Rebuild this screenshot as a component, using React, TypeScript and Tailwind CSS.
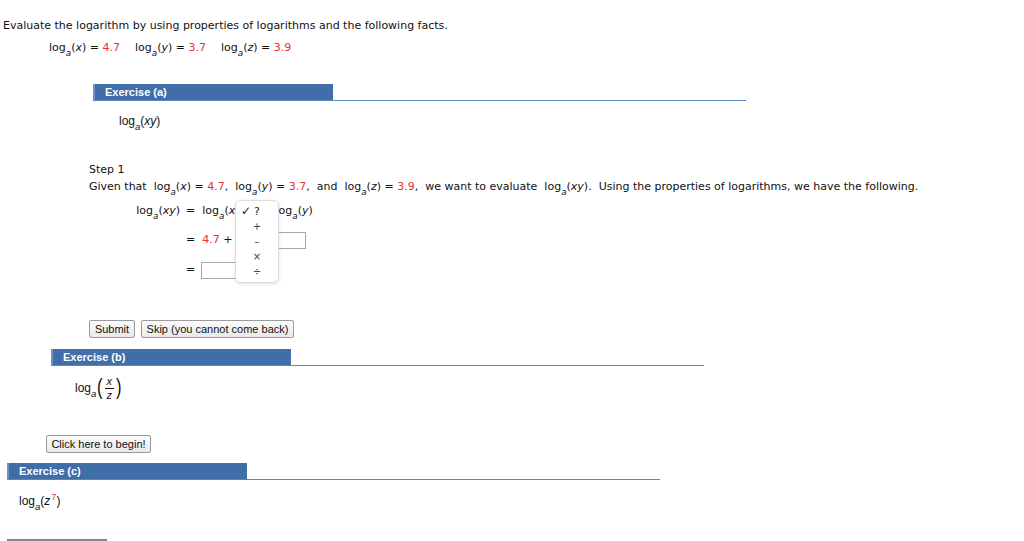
import React from "react";

const V = { fontFamily: '"DejaVu Sans", Verdana, sans-serif' };
const A = { fontFamily: '"Liberation Sans", Arial, sans-serif' };

function Log({ arg, sub = "a" }: { arg: React.ReactNode; sub?: string }) {
  return (
    <span className="whitespace-nowrap">
      log<sub className="italic text-[0.8em] relative top-[2px] align-sub">{sub}</sub>({arg})
    </span>
  );
}

function R({ children }: { children: React.ReactNode }) {
  return <span className="text-[#e8312f]">{children}</span>;
}

function Header({ label }: { label: string }) {
  return (
    <div className="w-[653px] h-[17px] border-b border-[#5b85bd] flex" style={A}>
      <div className="w-[240px] h-[16px] bg-[#3f6ea8] border-l-2 border-[#6d93c6] pl-[10px] text-white font-bold text-[11px] leading-[16px]">
        {label}
      </div>
    </div>
  );
}

function Btn({ children, w }: { children: React.ReactNode; w: string }) {
  return (
    <button
      className={`${w} h-[18px] border border-[#9a9a9a] rounded-[2px] bg-gradient-to-b from-[#fbfbfb] to-[#e9e9e9] text-[11px] leading-[16px] text-[#111] px-0`}
      style={A}
    >
      {children}
    </button>
  );
}

export default function App() {
  return (
    <div className="bg-white w-[1024px] h-[541px] overflow-hidden text-[#111]">
      <div className="pt-[18px] pl-[3px] h-[34px] text-[11px] leading-[16px]" style={V}>
        Evaluate the logarithm by using properties of logarithms and the following facts.
      </div>
      <div className="mt-[6px] pl-[49px] h-[16px] text-[11px] leading-[16px] flex" style={V}>
        <span><Log arg={<i>x</i>} /> = <R>4.7</R></span>
        <span className="ml-[15px]"><Log arg={<i>y</i>} /> = <R>3.7</R></span>
        <span className="ml-[15px]"><Log arg={<i>z</i>} /> = <R>3.9</R></span>
      </div>

      {/* Exercise (a) */}
      <div className="ml-[89px] mt-[28px]">
        <div className="ml-[4px]">
          <Header label="Exercise (a)" />
        </div>
        <div className="mt-[12px] ml-[30px] h-[16px] text-[12px] leading-[16px]" style={A}>
          <Log arg={<i>xy</i>} />
        </div>
        <div className="mt-[33px] h-[16px] text-[11px] leading-[16px]" style={V}>Step 1</div>
        <div className="mt-[1px] h-[16px] text-[11px] leading-[16px] whitespace-nowrap" style={V}>
          Given that&nbsp; <Log arg={<i>x</i>} /> = <R>4.7</R>,&nbsp; <Log arg={<i>y</i>} /> = <R>3.7</R>,&nbsp; and&nbsp;{" "}
          <Log arg={<i>z</i>} /> = <R>3.9</R>,&nbsp; we want to evaluate&nbsp; <Log arg={<i>xy</i>} />.&nbsp; Using the properties of logarithms, we have the following.
        </div>
        <div className="relative text-[11px]" style={V}>
          <div className="mt-[6px] h-[20px] flex items-center">
            <span className="w-[97px] text-right pr-[6px]"><Log arg={<i>xy</i>} /></span>
            <span>=&nbsp;&nbsp;<Log arg={<i>x</i>} /></span>
            <span className="inline-block w-[28px] ml-[4px]" />
            <span className="ml-[4px]"><Log arg={<i>y</i>} /></span>
          </div>
          <div className="mt-[9px] h-[20px] flex items-center">
            <span className="w-[97px]" />
            <span>=&nbsp;&nbsp;<R>4.7</R> +</span>
            <span className="ml-[4px] inline-block w-[70px] h-[17px] border border-[#a8a8a8]" />
          </div>
          <div className="mt-[10px] h-[20px] flex items-center">
            <span className="w-[97px]" />
            <span>=</span>
            <span className="ml-[6px] inline-block w-[70px] h-[17px] border border-[#a8a8a8]" />
          </div>
          <div className="absolute z-10 left-[146px] top-[-1px] w-[44px] h-[83px] bg-white border border-[#dcdcdc] rounded-[6px] shadow-[0_1px_4px_rgba(0,0,0,0.12)] text-[10px] text-[#444] flex flex-col items-center pt-[3px]">
            <div className="h-[15px] leading-[15px] w-full flex text-[#222]">
              <span className="ml-[5px] text-[12px]">✓</span>
              <span className="ml-[3px] text-[11px]">?</span>
            </div>
            <div className="h-[15px] leading-[15px]">+</div>
            <div className="h-[15px] leading-[15px]">–</div>
            <div className="h-[15px] leading-[15px]">×</div>
            <div className="h-[15px] leading-[15px]">÷</div>
          </div>
        </div>
        <div className="mt-[40px] flex gap-[6px]">
          <Btn w="w-[46px]">Submit</Btn>
          <Btn w="w-[153px]">Skip (you cannot come back)</Btn>
        </div>
      </div>

      {/* Exercise (b) */}
      <div className="ml-[46px] mt-[11px]">
        <div className="ml-[5px]">
          <Header label="Exercise (b)" />
        </div>
        <div className="mt-[9px] ml-[29px] h-[26px] flex items-center text-[12px]" style={A}>
          <span>
            log<sub className="italic text-[0.8em] relative top-[2px] align-sub">a</sub>
          </span>
          <span className="text-[22px] leading-[26px] font-light -mt-[2px] scale-x-75">(</span>
          <span className="inline-flex flex-col items-center italic text-[11px] leading-[11px] mx-[1px]">
            <span>x</span>
            <span className="w-[9px] border-t border-[#111] my-[1px]" />
            <span>z</span>
          </span>
          <span className="text-[22px] leading-[26px] font-light -mt-[2px] scale-x-75">)</span>
        </div>
        <div className="mt-[29px]">
          <Btn w="w-[105px]">Click here to begin!</Btn>
        </div>
      </div>

      {/* Exercise (c) */}
      <div className="ml-[7px] mt-[9px]">
        <Header label="Exercise (c)" />
        <div className="mt-[13px] ml-[12px] h-[16px] text-[12px] leading-[16px]" style={A}>
          log<sub className="italic text-[0.8em] relative top-[2px] align-sub">a</sub>(<i>z</i>
          <sup className="text-[9px] text-[#e8312f] relative -top-[5px] ml-[1px]">7</sup>)
        </div>
        <div className="mt-[30px] w-[100px] h-[2px] bg-[#8a8a8a]" />
      </div>
    </div>
  );
}
